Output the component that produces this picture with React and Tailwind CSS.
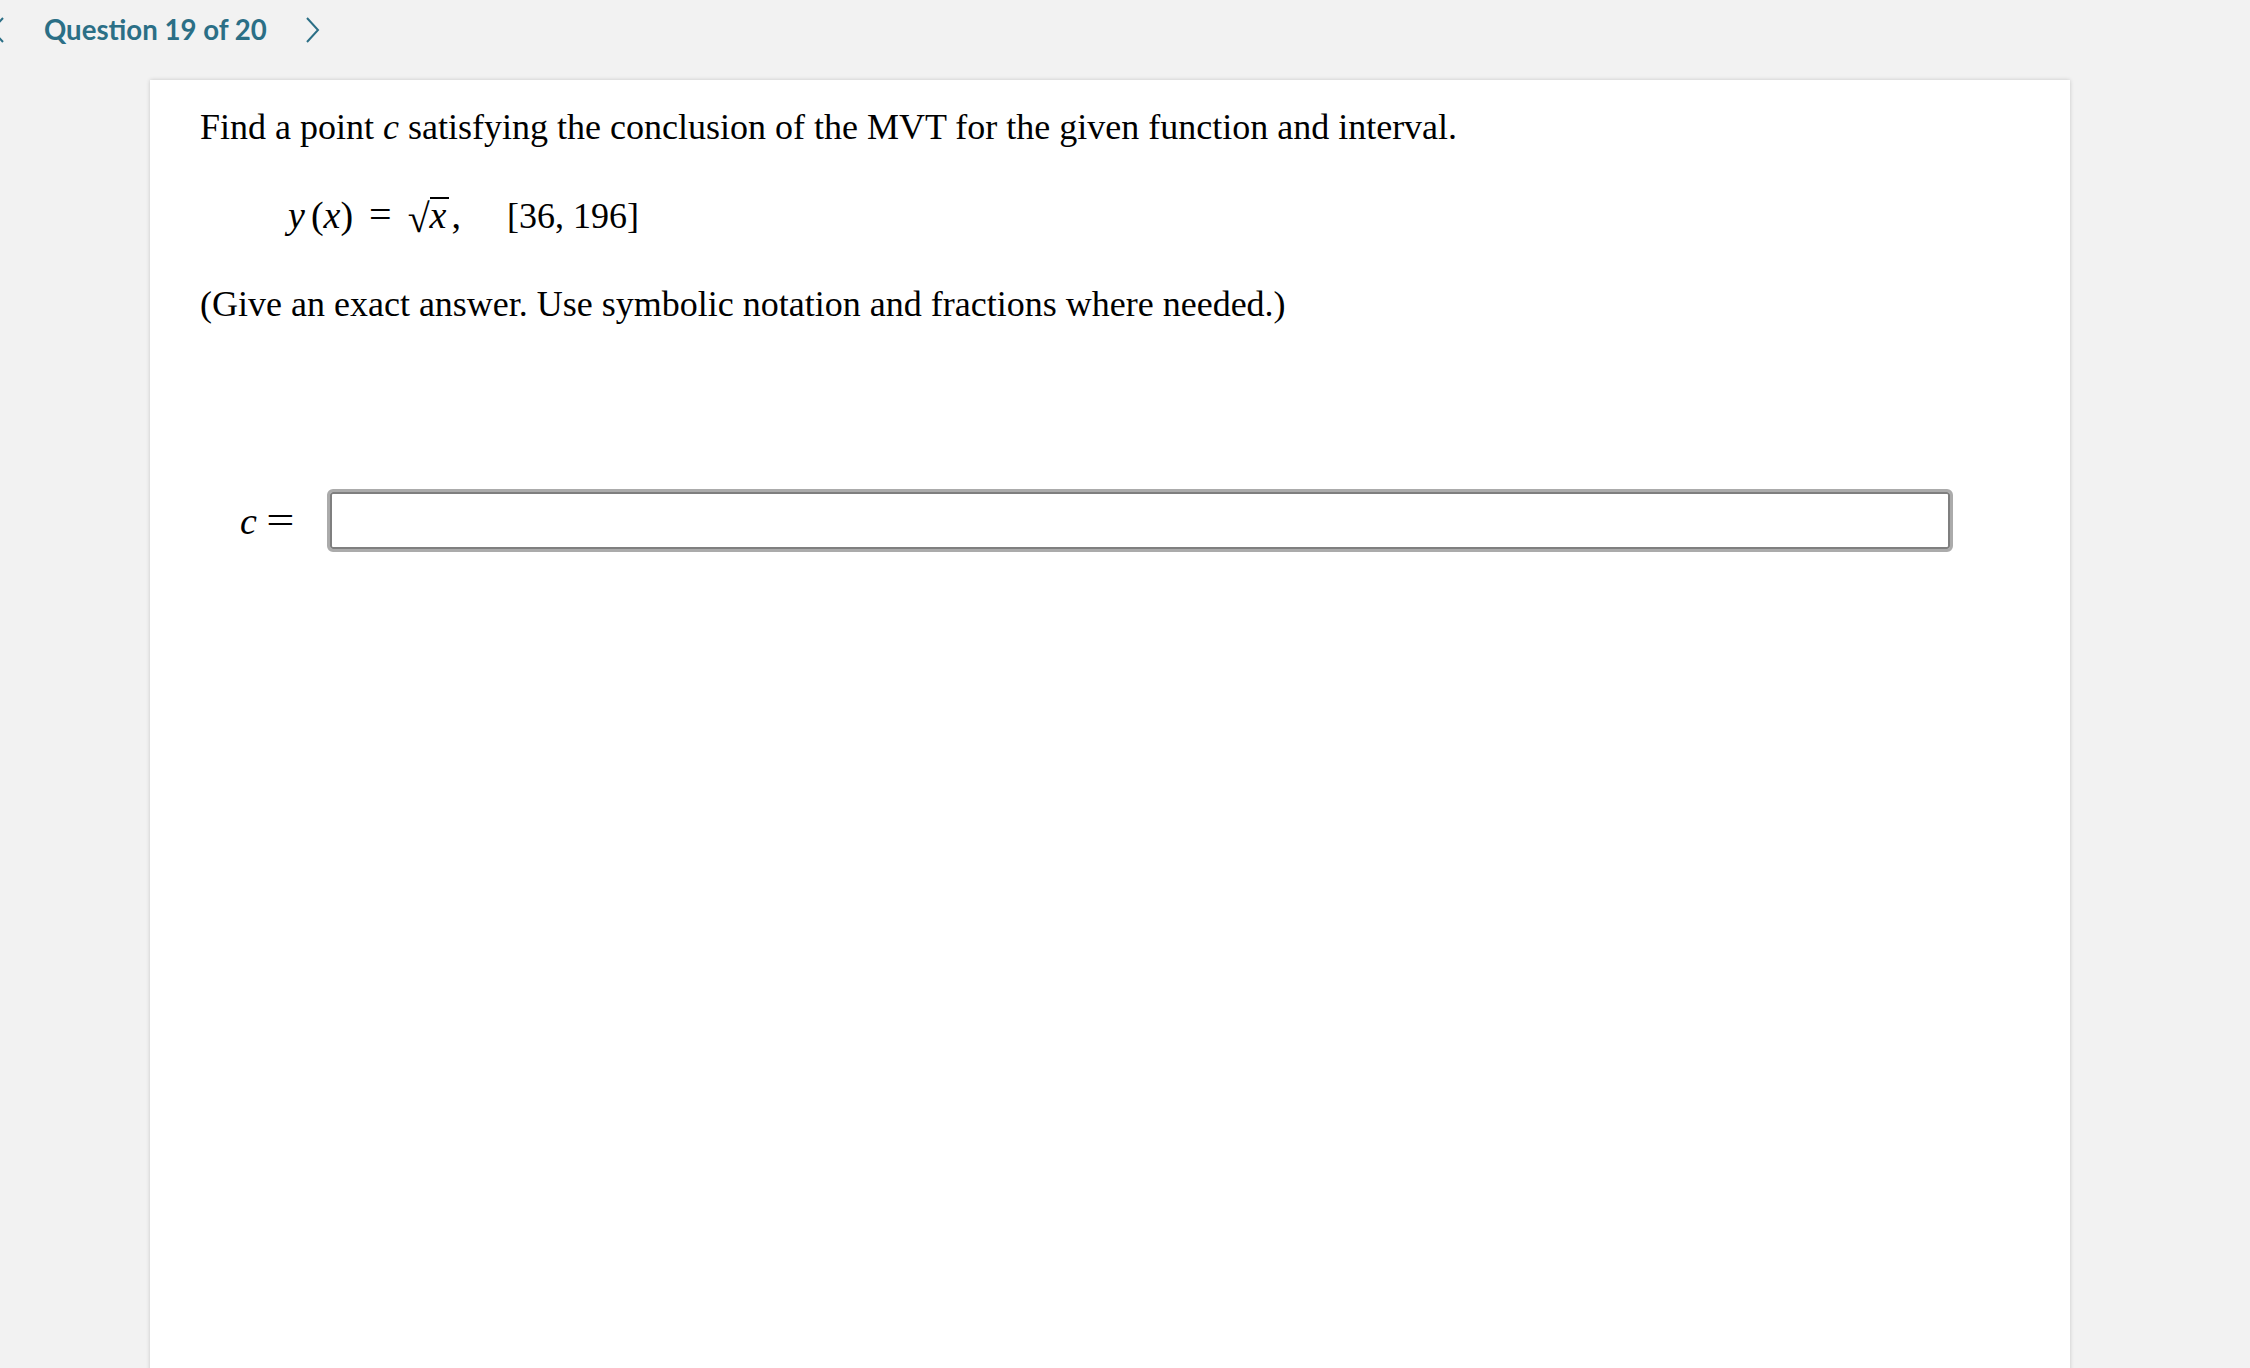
import React from 'react'

const ChevronLeft = ({ className }) => (
  <svg viewBox="0 0 16 26" className={className} fill="none" stroke="currentColor" strokeWidth="2">
    <path d="M13 1 L2 13 L13 25" />
  </svg>
)

const ChevronRight = ({ className }) => (
  <svg viewBox="0 0 16 26" className={className} fill="none" stroke="currentColor" strokeWidth="2">
    <path d="M3 1 L14 13 L3 25" />
  </svg>
)

const App = () => {
  return (
    <div className="min-h-[1368px] h-[1368px] overflow-hidden bg-[#f2f2f2]">
      {/* Question navigation */}
      <div className="h-[60px] flex items-center text-[#2b6f86]">
        <ChevronLeft className="w-[16px] h-[26px] -ml-[10px]" />
        <span className="ml-[38px] text-[27.6px] font-bold font-['Lato',sans-serif]">
          Question 19 of 20
        </span>
        <ChevronRight className="w-[16px] h-[26px] ml-[37px]" />
      </div>

      {/* Question card */}
      <div className="mt-[20px] ml-[150px] w-[1920px] h-[1400px] bg-white shadow-[0_0_4px_rgba(0,0,0,0.18)] pt-[25px] pl-[50px] font-['Liberation_Serif','Times_New_Roman',serif] text-black text-[36px] leading-[44px]">
        <p>
          Find a point <i>c</i> satisfying the conclusion of the MVT for the given function and interval.
        </p>

        <div className="mt-[44px] pl-[88px] flex items-baseline text-[38px]">
          <i>y</i>
          <span className="ml-[6px]">(</span>
          <i>x</i>
          <span>)</span>
          <span className="mx-[16px] text-[40px]">=</span>
          <span className="inline-flex items-baseline">
            <span className="relative top-[4px] text-[40px]">√</span>
            <span className="border-t-[2px] border-black leading-[32px] pr-[3px]">
              <i>x</i>
            </span>
          </span>
          <span className="ml-[2px]">,</span>
          <span className="ml-[46px] text-[36px]">[36, 196]</span>
        </div>

        <p className="mt-[44px]">
          (Give an exact answer. Use symbolic notation and fractions where needed.)
        </p>

        <div className="mt-[163px] flex items-center text-[38px]">
          <div className="w-[127px] pl-[40px] flex items-center">
            <i>c</i>
            <span className="ml-[12px] text-[40px] inline-block scale-x-[1.25]">=</span>
          </div>
          <input
            type="text"
            className="w-[1626px] h-[63px] rounded-[6px] border-[3px] border-[#ababab] shadow-[inset_0_0_0_2px_#7f7f7f] bg-white outline-none"
          />
        </div>
      </div>
    </div>
  )
}

export default App
